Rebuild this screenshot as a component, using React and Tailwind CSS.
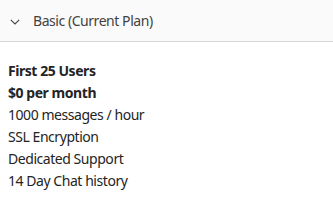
import React from "react";

export default function App() {
  return (
    <div className="w-[333px] h-[206px] bg-white text-[#242424] tracking-[-0.45px]" style={{ fontFamily: '"Noto Sans", sans-serif' }}>
      <div className="h-[42px] bg-[#fafafa] border-b border-[#d6d6d6] flex items-center pl-[10px]">
        <svg width="10" height="6" viewBox="0 0 10 6" className="mr-[13px] mt-[2px]">
          <path d="M0.8 0.8 L5 5 L9.2 0.8" fill="none" stroke="#444" strokeWidth="1.1" />
        </svg>
        <span className="text-[14px] text-[#424242]">Basic (Current Plan)</span>
      </div>
      <div className="pl-[8px] pt-[18px] text-[14px] leading-[22px]">
        <div className="font-bold">First 25 Users</div>
        <div className="font-bold">$0 per month</div>
        <div>1000 messages / hour</div>
        <div>SSL Encryption</div>
        <div>Dedicated Support</div>
        <div>14 Day Chat history</div>
      </div>
    </div>
  );
}
